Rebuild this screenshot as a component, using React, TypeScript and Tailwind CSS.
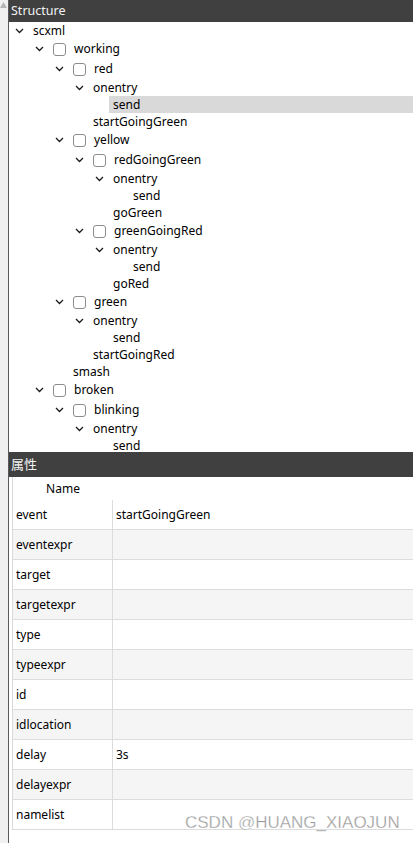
import React from "react";

type Node = {
  label: string;
  level: number;
  kind: "branch" | "state" | "leaf";
  selected?: boolean;
};

const tree: Node[] = [
  { label: "scxml", level: 0, kind: "branch" },
  { label: "working", level: 1, kind: "state" },
  { label: "red", level: 2, kind: "state" },
  { label: "onentry", level: 3, kind: "branch" },
  { label: "send", level: 4, kind: "leaf", selected: true },
  { label: "startGoingGreen", level: 3, kind: "leaf" },
  { label: "yellow", level: 2, kind: "state" },
  { label: "redGoingGreen", level: 3, kind: "state" },
  { label: "onentry", level: 4, kind: "branch" },
  { label: "send", level: 5, kind: "leaf" },
  { label: "goGreen", level: 4, kind: "leaf" },
  { label: "greenGoingRed", level: 3, kind: "state" },
  { label: "onentry", level: 4, kind: "branch" },
  { label: "send", level: 5, kind: "leaf" },
  { label: "goRed", level: 4, kind: "leaf" },
  { label: "green", level: 2, kind: "state" },
  { label: "onentry", level: 3, kind: "branch" },
  { label: "send", level: 4, kind: "leaf" },
  { label: "startGoingRed", level: 3, kind: "leaf" },
  { label: "smash", level: 2, kind: "leaf" },
  { label: "broken", level: 1, kind: "state" },
  { label: "blinking", level: 2, kind: "state" },
  { label: "onentry", level: 3, kind: "branch" },
  { label: "send", level: 4, kind: "leaf" },
];

const indent = ["pl-0", "pl-5", "pl-10", "pl-15", "pl-20", "pl-25"];

const props: [string, string][] = [
  ["event", "startGoingGreen"],
  ["eventexpr", ""],
  ["target", ""],
  ["targetexpr", ""],
  ["type", ""],
  ["typeexpr", ""],
  ["id", ""],
  ["idlocation", ""],
  ["delay", "3s"],
  ["delayexpr", ""],
  ["namelist", ""],
];

function Chevron() {
  return (
    <svg width="9" height="6" viewBox="0 0 9 6" className="block">
      <polyline points="1,1 4.5,4.5 8,1" fill="none" stroke="#1a1a1a" strokeWidth="1.3" />
    </svg>
  );
}

function TreeRow({ node }: { node: Node }) {
  const tall = node.kind === "state";
  return (
    <div className={`flex items-stretch ${tall ? "h-5" : "h-[17px]"} ${indent[node.level]}`}>
      <div className="w-5 shrink-0 flex items-center justify-center">
        {node.kind !== "leaf" && <Chevron />}
      </div>
      <div className={`flex-1 flex items-center pl-1 ${node.selected ? "bg-[#d9d9d9]" : ""}`}>
        {tall && <div className="w-[13px] h-[13px] mr-2 rounded-[3px] border border-[#8c8c8c] bg-white shrink-0" />}
        <span className="whitespace-nowrap leading-none">{node.label}</span>
      </div>
    </div>
  );
}

export default function App() {
  return (
    <div
      className="relative w-[413px] h-[843px] overflow-hidden bg-white flex text-[12px] text-black"
      style={{ fontFamily: '"Noto Sans", "Noto Sans CJK SC", sans-serif' }}
    >
      {/* left gutter */}
      <div className="w-2 shrink-0 bg-[#f0f0f0] relative">
        <svg width="7" height="8" viewBox="0 0 7 8" className="absolute left-0 top-[1px]">
          <polygon points="0,7 3.5,1 7,7" fill="#b5b5b5" />
        </svg>
      </div>

      <div className="flex-1 flex flex-col border-l border-[#5a5a5a] min-w-0">
        <div className="h-[22px] shrink-0 bg-[#404040] text-[#f2f2f2] flex items-center pl-[2px] text-[12.5px]">
          Structure
        </div>

        <div className="h-[430px] shrink-0 overflow-hidden">
          {tree.map((n, i) => (
            <TreeRow key={i} node={n} />
          ))}
        </div>

        <div className="h-[25px] shrink-0 bg-[#404040] text-[#f2f2f2] flex items-center pl-[2px] text-[13px]">
          属性
        </div>

        <div className="flex-1 pl-[3px]">
          <div className="border-l border-[#dadada]">
            <div className="h-[23px] flex items-center">
              <div className="w-[100px] text-center">Name</div>
            </div>
            {props.map(([k, v], i) => (
              <div
                key={k}
                className={`h-[30px] flex border-b border-[#dcdcdc] ${i % 2 === 1 ? "bg-[#f5f5f5]" : "bg-white"}`}
              >
                <div className="w-[100px] shrink-0 border-r border-[#dcdcdc] flex items-center pl-[3px]">{k}</div>
                <div className="flex-1 flex items-center pl-[3px]">{v}</div>
              </div>
            ))}
          </div>
        </div>
      </div>

      <div
        className="absolute left-[185px] top-[813px] text-[17px] leading-[20px] text-[#9a9a9a] whitespace-nowrap pointer-events-none"
        style={{ fontFamily: '"Liberation Sans", Arial, sans-serif', WebkitTextStroke: "0.3px #ffffff" }}
      >
        CSDN @HUANG_XIAOJUN
      </div>
    </div>
  );
}
